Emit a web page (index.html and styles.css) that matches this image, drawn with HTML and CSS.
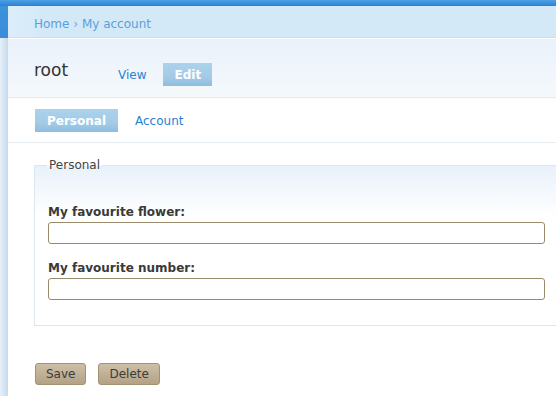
FILE: index.html
```html
<!DOCTYPE html>
<html>
  <head>
    <meta charset="utf-8" />
    <title>root | My account</title>
    <link rel="stylesheet" href="styles.css">
  </head>
  <body>
    <div id="page">
      <div class="breadcrumb">
        <a href="#">Home</a> › <a href="#">My account</a>
      </div>
      <div class="header">
        <h1 class="title">root</h1>
        <ul class="tabs primary">
          <li><a href="#">View</a></li>
          <li class="active"><a href="#">Edit</a></li>
        </ul>
      </div>
      <ul class="tabs secondary">
        <li class="active"><a href="#">Personal</a></li>
        <li><a href="#">Account</a></li>
      </ul>
      <form class="profile-form">
        <fieldset>
          <legend>Personal</legend>
          <div class="form-item">
            <label for="flower">My favourite flower:</label>
            <input type="text" id="flower" />
          </div>
          <div class="form-item">
            <label for="number">My favourite number:</label>
            <input type="text" id="number" />
          </div>
        </fieldset>
        <div class="actions">
          <button type="button">Save</button>
          <button type="button">Delete</button>
        </div>
      </form>
    </div>
  </body>
</html>
```

FILE: styles.css
```css
html,
body {
  height: 100%;
}
body {
  margin: 0;
  overflow: hidden;
  font-family: 'DejaVu Sans', Verdana, sans-serif;
  font-size: 12px;
  color: #333;
  background:
    linear-gradient(#4ba2e6, #2b80d2) 0 0 / 100% 6px no-repeat,
    linear-gradient(#3d92dc, #3a8cd8) 0 6px / 8px 32px no-repeat,
    linear-gradient(90deg, #e6f0f9, #c6dbee) 0 38px / 8px 100% no-repeat,
    #fff;
}
a {
  text-decoration: none;
}
#page {
  margin: 6px 0 0 8px;
  width: 600px;
  background: #fff;
}
.breadcrumb {
  height: 26px;
  line-height: 26px;
  padding: 5px 0 0 26px;
  background: linear-gradient(90deg, #dcedf9 0, #d3e9f8 40px, #d3e9f8);
  border-bottom: 1px solid #c9e0f4;
  color: #6aa8dc;
}
.breadcrumb a {
  color: #5b9fdb;
}
.header {
  display: flex;
  align-items: flex-start;
  height: 58px;
  margin-top: 1px;
  padding: 0 0 0 26px;
  background: linear-gradient(#e9f1fa, #f5f9fc);
  border-bottom: 1px solid #e4ebf1;
}
.title {
  width: 73px;
  margin: 21px 0 0;
  font-size: 17px;
  font-weight: normal;
  line-height: 20px;
  color: #333;
}
.tabs {
  display: flex;
  margin: 0;
  padding: 0;
  list-style: none;
}
.tabs li {
  margin-right: 6px;
}
.tabs a {
  display: block;
  height: 23px;
  line-height: 24px;
  padding: 0 11px;
  color: #2a7fd2;
}
.tabs .active a {
  color: #fff;
  font-weight: bold;
  background: linear-gradient(#acd2eb, #a3cbe7 60%, #8dbddf);
}
.primary {
  margin-top: 24px;
}
.secondary {
  height: 45px;
  padding: 11px 0 0 27px;
  box-sizing: border-box;
  border-bottom: 1px solid #e4ebf1;
}
.secondary li {
  margin-right: 5px;
}
.secondary a {
  padding: 0 12px;
}
.profile-form {
  padding: 15px 0 0 26px;
}
fieldset {
  width: 520px;
  margin: 0;
  padding: 32px 13px 25px;
  border: 1px solid #dae7f1;
  background: linear-gradient(#e8f1fa, #ffffff 50px);
}
legend {
  padding: 0 2px;
  margin-left: -1px;
  color: #444;
}
.form-item + .form-item {
  margin-top: 16px;
}
.form-item label {
  display: block;
  font-weight: bold;
  line-height: 16px;
  margin-bottom: 2px;
  color: #3a3a3a;
}
.form-item input {
  display: block;
  width: 497px;
  height: 22px;
  box-sizing: border-box;
  margin: 0;
  border: 1px solid #9a8a6c;
  border-radius: 3px;
  background: #fff;
}
.actions {
  display: flex;
  gap: 12px;
  margin-top: 37px;
  padding-left: 1px;
}
.actions button {
  height: 22px;
  padding: 0 10px;
  font-family: 'DejaVu Sans', Verdana, sans-serif;
  font-size: 12px;
  color: #3b3b3b;
  border: 1px solid #a29274;
  border-radius: 3px;
  background: linear-gradient(#cdbfa8, #b3a285);
}
```
